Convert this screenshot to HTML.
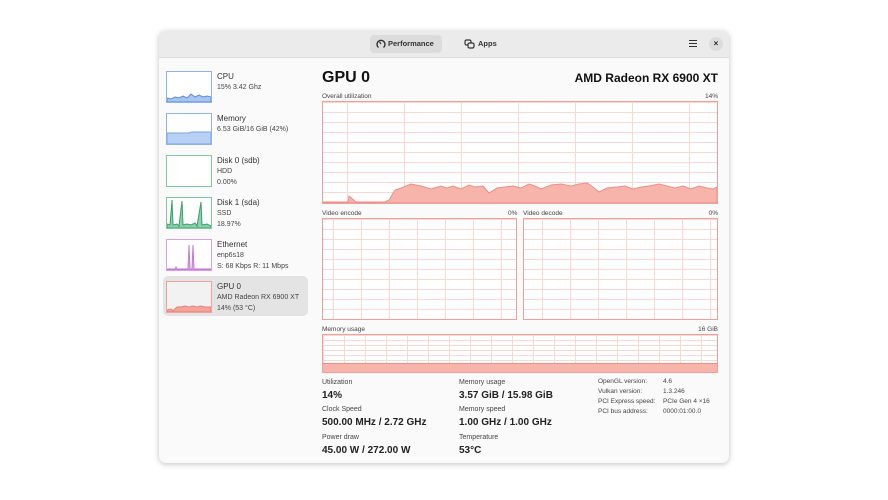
<!DOCTYPE html><html><head><style>
*{margin:0;padding:0;box-sizing:border-box}
body{width:888px;height:500px;background:#fff;font-family:"Liberation Sans",sans-serif;position:relative;overflow:hidden;color:#222}
.win{position:absolute;left:159px;top:31px;width:570px;height:432px;background:#fafafa;border-radius:7px;box-shadow:0 1px 6px rgba(0,0,0,.25);overflow:hidden}
.hdr{position:absolute;left:0;top:0;width:570px;height:27px;background:#ebebeb;border-bottom:1px solid #dcdcdc}
.a{position:absolute;font-size:7px;color:#444;white-space:nowrap}
.t{position:absolute;font-size:8px;color:#333;white-space:nowrap}
.th{position:absolute;width:46px;height:32px;background:#fff;border:1px solid}
.g{position:absolute;border:1px solid #f0a098;background-color:#fff;
background-image:linear-gradient(#f6d8d4 1px,transparent 1px),linear-gradient(90deg,#f6d8d4 1px,transparent 1px);background-size:100% 10px,57px 100%}
.v{position:absolute;font-size:10px;font-weight:bold;color:#222;white-space:nowrap}
</style></head><body>
<div class="win">
<div class="hdr">
<div style="position:absolute;left:211px;top:4px;width:72px;height:18px;background:#dcdcdc;border-radius:4px"></div>
<svg style="position:absolute;left:217px;top:8px" width="10" height="10" viewBox="0 0 10 10"><path d="M2.5 8.5A4 4 0 1 1 7.5 8.5" fill="none" stroke="#333" stroke-width="1.4"/><path d="M5 5L3.5 3" stroke="#333" stroke-width="1.2"/></svg>
<div class="t" style="left:229px;top:8px;font-weight:bold;font-size:7.5px">Performance</div>
<svg style="position:absolute;left:305px;top:8px" width="11" height="10" viewBox="0 0 11 10"><rect x="1" y="1" width="6" height="5" rx="1.5" fill="none" stroke="#333" stroke-width="1.2"/><rect x="4" y="4" width="6" height="5" rx="1.5" fill="#ebebeb" stroke="#333" stroke-width="1.2"/></svg>
<div class="t" style="left:319px;top:8px;font-weight:bold;font-size:7.5px">Apps</div>
<div style="position:absolute;left:530px;top:9px;width:8px;height:1.3px;background:#333;box-shadow:0 3px 0 #333,0 6px 0 #333"></div>
<div style="position:absolute;left:550px;top:6px;width:14px;height:14px;border-radius:50%;background:#dcdcdc;font-size:8px;font-weight:bold;text-align:center;line-height:14px">×</div>
</div>
<!-- sidebar -->
<div style="position:absolute;left:4px;top:245px;width:145px;height:40px;background:#e4e4e4;border-radius:5px"></div>
<div class="th" style="left:7px;top:40px;border-color:#8fb2e8"><svg width="44" height="30"><path d="M0 30V26L4 27L8 25L12 26L16 24L20 26L24 22L28 25L32 23L36 25L40 24L44 25V30Z" fill="#a8c4ef" stroke="#5a8bdc"/></svg></div>
<div class="t" style="left:58px;top:41px">CPU</div><div class="a" style="left:58px;top:53px">15% 3.42 Ghz</div>
<div class="th" style="left:7px;top:82px;border-color:#8fb2e8"><svg width="44" height="30"><path d="M0 30V19H22L24 18H44V30Z" fill="#b7d0f3" stroke="#7ba3e6"/></svg></div>
<div class="t" style="left:58px;top:83px">Memory</div><div class="a" style="left:58px;top:95px">6.53 GiB/16 GiB (42%)</div>
<div class="th" style="left:7px;top:124px;border-color:#80c8a2"></div>
<div class="t" style="left:58px;top:125px">Disk 0 (sdb)</div><div class="a" style="left:58px;top:137px">HDD</div><div class="a" style="left:58px;top:148px">0.00%</div>
<div class="th" style="left:7px;top:166px;border-color:#80c8a2"><svg width="44" height="30"><path d="M0 30V26L3 27L5 2L6 27L10 26L12 28L15 3L16 27L20 26L24 27L28 25L30 28L34 4L35 27L40 26L44 28V30Z" fill="#8ed0ad" stroke="#3a9e6a"/></svg></div>
<div class="t" style="left:58px;top:167px">Disk 1 (sda)</div><div class="a" style="left:58px;top:179px">SSD</div><div class="a" style="left:58px;top:190px">18.97%</div>
<div class="th" style="left:7px;top:208px;border-color:#d8a0e0"><svg width="44" height="30"><path d="M0 30V29H8L9 27L10 29H21L22 5L23 29L25 29L26 5L27 29H44V30Z" fill="#e4b3ec" stroke="#c27ad0"/></svg></div>
<div class="t" style="left:58px;top:209px">Ethernet</div><div class="a" style="left:58px;top:221px">enp6s18</div><div class="a" style="left:58px;top:232px">S: 68 Kbps R: 11 Mbps</div>
<div class="th" style="left:7px;top:250px;border-color:#eea39b;background:#f2f2f2"><svg width="44" height="30"><path d="M0 30V28L4 27L6 29L10 25L14 25L18 24L22 25L26 24L30 25L34 24L38 25L44 25V30Z" fill="#f3a59c" stroke="#e87f74"/></svg></div>
<div class="t" style="left:58px;top:251px">GPU 0</div><div class="a" style="left:58px;top:263px">AMD Radeon RX 6900 XT</div><div class="a" style="left:58px;top:274px">14% (53 °C)</div>
<!-- main -->
<div style="position:absolute;left:163px;top:38px;font-size:16px;font-weight:bold;color:#111">GPU 0</div>
<div style="position:absolute;right:11px;top:40px;font-size:12px;font-weight:bold;color:#111">AMD Radeon RX 6900 XT</div>
<div class="a" style="left:163px;top:62px;font-size:6.5px">Overall utilization</div><div class="a" style="right:11px;top:62px;font-size:6.5px">14%</div>
<div class="g" style="left:163px;top:70px;width:396px;height:103px;background-position:0 0,-33px 0">
<svg style="position:absolute;left:0;top:0" width="394" height="101" viewBox="0 0 394 101"><path d="M0 101V100H25L26 94L33 100L62 100L66 98L72 88L78 86L88 82L98 84L108 87L118 84L124 86L130 84L138 87L146 83L152 85L160 84L166 91L174 86L182 85L190 84L198 86L206 82L212 84L218 87L228 83L238 82L248 84L256 82L264 81L270 85L276 90L284 86L294 85L302 84L310 87L318 85L326 84L336 82L344 84L352 86L360 84L368 87L376 84L384 86L390 87L394 85V101Z" fill="#f6b4ab" stroke="#ec8f84" stroke-width="1"/></svg></div>
<div class="a" style="left:163px;top:179px;font-size:6.5px">Video encode</div><div class="a" style="left:349px;top:179px;font-size:6.5px">0%</div>
<div class="a" style="left:364px;top:179px;font-size:6.5px">Video decode</div><div class="a" style="right:11px;top:179px;font-size:6.5px">0%</div>
<div class="g" style="left:163px;top:187px;width:195px;height:102px;background-size:100% 10px,28px 100%;background-position:0 0,-18px 0"></div>
<div class="g" style="left:364px;top:187px;width:195px;height:102px;background-size:100% 10px,28px 100%;background-position:0 0,-10px 0"></div>
<div class="a" style="left:163px;top:295px;font-size:6.5px">Memory usage</div><div class="a" style="right:11px;top:295px;font-size:6.5px">16 GiB</div>
<div class="g" style="left:163px;top:303px;width:396px;height:39px;background-size:100% 5px,21px 100%"><div style="position:absolute;left:0;bottom:0;width:100%;height:9px;background:#f6b4ab;border-top:1px solid #ec8f84"></div></div>
<div class="a" style="left:163px;top:348px">Utilization</div><div class="v" style="left:163px;top:359px">14%</div>
<div class="a" style="left:163px;top:375px">Clock Speed</div><div class="v" style="left:163px;top:386px">500.00 MHz / 2.72 GHz</div>
<div class="a" style="left:163px;top:403px">Power draw</div><div class="v" style="left:163px;top:414px">45.00 W / 272.00 W</div>
<div class="a" style="left:300px;top:348px">Memory usage</div><div class="v" style="left:300px;top:359px">3.57 GiB / 15.98 GiB</div>
<div class="a" style="left:300px;top:375px">Memory speed</div><div class="v" style="left:300px;top:386px">1.00 GHz / 1.00 GHz</div>
<div class="a" style="left:300px;top:403px">Temperature</div><div class="v" style="left:300px;top:414px">53°C</div>
<div class="a" style="left:439px;top:347px;font-size:6.5px">OpenGL version:</div><div class="a" style="left:504px;top:347px;font-size:6.5px">4.6</div>
<div class="a" style="left:439px;top:357px;font-size:6.5px">Vulkan version:</div><div class="a" style="left:504px;top:357px;font-size:6.5px">1.3.246</div>
<div class="a" style="left:439px;top:367px;font-size:6.5px">PCI Express speed:</div><div class="a" style="left:504px;top:367px;font-size:6.5px">PCIe Gen 4 ×16</div>
<div class="a" style="left:439px;top:377px;font-size:6.5px">PCI bus address:</div><div class="a" style="left:504px;top:377px;font-size:6.5px">0000:01:00.0</div>
</div>
</body></html>
